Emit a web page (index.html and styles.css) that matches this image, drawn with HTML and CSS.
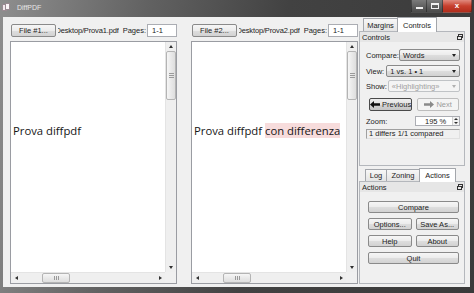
FILE: index.html
```html
<!DOCTYPE html>
<html>
<head>
<meta charset="utf-8">
<title>DiffPDF</title>
<link rel="stylesheet" href="styles.css">
</head>
<body>
<div class="win">
  <div class="titlebar">
    <svg class="appicon" width="8" height="8" viewBox="0 0 8 8"><rect x="0.5" y="1.5" width="4" height="6" fill="#f3e9ee" stroke="#9a8a92"/><rect x="3.5" y="0.5" width="4" height="6" fill="#fbf5f8" stroke="#9a8a92"/></svg>
    <span class="title">DiffPDF</span>
    <div class="wbtns">
      <div class="wbtn"><span class="g-min"></span></div>
      <div class="wbtn"><span class="g-max"></span></div>
      <div class="wbtn close">x</div>
    </div>
  </div>
  <div class="client">
    <div class="views">
      <div class="pane">
        <div class="toolbar">
          <div class="btn filebtn">File #1...</div>
          <div class="path"><span>Desktop/Prova1.pdf</span></div>
          <span class="plabel">Pages:</span>
          <div class="pinput">1-1</div>
        </div>
        <div class="view">
          <div class="page"><p class="doc">Prova diffpdf</p></div>
          <div class="vscroll">
            <div class="varr"><span class="tri-up"></span></div>
            <div class="vtrack"><div class="vthumb"><span class="grip-h"></span></div></div>
            <div class="varr"><span class="tri-down"></span></div>
          </div>
          <div class="hscroll">
            <div class="harr"><span class="tri-left"></span></div>
            <div class="htrack"><div class="hthumb"><span class="grip-v"></span></div></div>
            <div class="harr"><span class="tri-right"></span></div>
          </div>
          <div class="corner"></div>
        </div>
      </div>
      <div class="pane">
        <div class="toolbar">
          <div class="btn filebtn">File #2...</div>
          <div class="path"><span>Desktop/Prova2.pdf</span></div>
          <span class="plabel">Pages:</span>
          <div class="pinput">1-1</div>
        </div>
        <div class="view">
          <div class="page"><p class="doc">Prova diffpdf <span class="diff">con differenza</span></p></div>
          <div class="vscroll">
            <div class="varr"><span class="tri-up"></span></div>
            <div class="vtrack"><div class="vthumb"><span class="grip-h"></span></div></div>
            <div class="varr"><span class="tri-down"></span></div>
          </div>
          <div class="hscroll">
            <div class="harr"><span class="tri-left"></span></div>
            <div class="htrack"><div class="hthumb"><span class="grip-v"></span></div></div>
            <div class="harr"><span class="tri-right"></span></div>
          </div>
          <div class="corner"></div>
        </div>
      </div>
    </div>
    <div class="dock">
      <div class="group group1">
        <div class="tabs tabs1">
          <div class="tab w-margins">Margins</div>
          <div class="tab sel w-controls">Controls</div>
        </div>
        <div class="panel">
          <div class="dtitle"><span>Controls</span>
            <svg width="6" height="6" viewBox="0 0 6 6"><rect x="1.5" y="0.5" width="4" height="3" fill="none" stroke="#333"/><rect x="0.5" y="2.5" width="4" height="3" fill="#e9e9e9" stroke="#333"/></svg>
          </div>
          <div class="ccontent">
            <div class="crow r-compare"><span class="lbl">Compare:</span><div class="combo">Words<span class="carr"></span></div></div>
            <div class="crow r-view"><span class="lbl">View:</span><div class="combo">1 vs. 1 • 1<span class="carr"></span></div></div>
            <div class="crow r-show"><span class="lbl">Show:</span><div class="combo disabled">«Highlighting»<span class="carr"></span></div></div>
            <div class="crow r-nav">
              <div class="btn navbtn focus">
                <svg width="10" height="7" viewBox="0 0 10 7"><path d="M0 3.5 L4 0 L4 2.3 L10 2.3 L10 4.7 L4 4.7 L4 7 Z" fill="#111"/></svg>
                <span>Previous</span>
              </div>
              <div class="btn navbtn disabledbtn">
                <svg width="10" height="7" viewBox="0 0 10 7"><path d="M10 3.5 L6 0 L6 2.3 L0 2.3 L0 4.7 L6 4.7 L6 7 Z" fill="#333"/></svg>
                <span>Next</span>
              </div>
            </div>
            <div class="crow r-zoom"><span class="lbl">Zoom:</span>
              <div class="spin"><span class="spinval">195 %</span><div class="spinbtns"><span class="tri-up small"></span><span class="tri-down small"></span></div></div>
            </div>
            <div class="status">1 differs 1/1 compared</div>
          </div>
        </div>
      </div>
      <div class="group group2">
        <div class="tabs tabs2">
          <div class="tab w-log">Log</div>
          <div class="tab w-zoning">Zoning</div>
          <div class="tab sel w-actions">Actions</div>
        </div>
        <div class="panel">
          <div class="dtitle"><span>Actions</span>
            <svg width="6" height="6" viewBox="0 0 6 6"><rect x="1.5" y="0.5" width="4" height="3" fill="none" stroke="#333"/><rect x="0.5" y="2.5" width="4" height="3" fill="#e9e9e9" stroke="#333"/></svg>
          </div>
          <div class="acontent">
            <div class="btn abtn first">Compare</div>
            <div class="arow"><div class="btn abtn">Options...</div><div class="btn abtn">Save As...</div></div>
            <div class="arow"><div class="btn abtn">Help</div><div class="btn abtn">About</div></div>
            <div class="btn abtn">Quit</div>
          </div>
        </div>
      </div>
    </div>
  </div>
</div>
</body>
</html>
```

FILE: styles.css
```css
* { box-sizing: border-box; }
html, body { margin: 0; padding: 0; }
body {
  width: 474px;
  height: 293px;
  overflow: hidden;
  font-family: "Liberation Sans", Arial, sans-serif;
  font-size: 7.5px;
  color: #1c1c1c;
  background: #3a3a3a;
}
.win {
  width: 474px;
  height: 293px;
  display: flex;
  flex-direction: column;
  background: linear-gradient(100deg, #8e8e8e 0%, #626262 28%, #424242 55%, #3a3a3a 100%);
}
.titlebar {
  height: 17px;
  flex: none;
  display: flex;
  align-items: flex-start;
}
.appicon { margin: 3px 0 0 2px; }
.title {
  margin: 4px 0 0 7px;
  font-size: 7px;
  line-height: 8px;
  color: #e6e6e6;
}
.wbtns {
  margin-left: auto;
  margin-right: 2px;
  display: flex;
  height: 13px;
}
.wbtn {
  width: 16px;
  height: 13px;
  display: flex;
  align-items: center;
  justify-content: center;
  border: 1px solid rgba(0,0,0,0.35);
  border-top: none;
  background: linear-gradient(#7a7a7a, #4a4a4a);
}
.wbtn + .wbtn { border-left: none; }
.g-min { width: 7px; height: 2px; background: #f0f0f0; margin-top: 4px; }
.g-max { width: 8px; height: 6px; border: 1px solid #f0f0f0; border-top-width: 2px; }
.wbtn.close {
  width: 29px;
  border-radius: 0 0 3px 0;
  background: linear-gradient(#e08a7e, #c7402e 50%, #b12d1c);
  color: #fff;
  font-weight: bold;
  font-size: 8px;
  line-height: 8px;
}

.client {
  flex: 1;
  margin: 0 4px 6px 3px;
  background: #f0f0f0;
  display: flex;
  min-height: 0;
}
.views {
  display: flex;
  gap: 14px;
  padding: 6px 0 3px 7px;
}
.pane {
  width: 167px;
  display: flex;
  flex-direction: column;
  gap: 3px;
}
.toolbar {
  height: 15px;
  display: flex;
  align-items: center;
}
.btn {
  display: flex;
  align-items: center;
  justify-content: center;
  border: 1px solid #8a8a8a;
  border-radius: 2px;
  background: linear-gradient(#f6f6f6 0%, #ececec 50%, #dedede 51%, #d2d2d2 100%);
  color: #1c1c1c;
  white-space: nowrap;
}
.filebtn {
  width: 45px;
  height: 13px;
  margin-left: 1px;
}
.path {
  flex: 1;
  overflow: hidden;
  display: flex;
  justify-content: flex-end;
  margin: 0 4px 0 2px;
}
.path span { flex: none; white-space: nowrap; letter-spacing: -0.15px; }
.plabel { margin-right: 1px; }
.pinput {
  width: 30px;
  height: 13px;
  border: 1px solid #abadb3;
  background: #fff;
  padding-left: 4px;
  line-height: 11px;
}
.view {
  flex: 1;
  border: 1px solid #9a9ca2;
  background: #fff;
  display: grid;
  grid-template-columns: 1fr 11px;
  grid-template-rows: 1fr 11px;
  min-height: 0;
}
.page { overflow: hidden; }
.doc {
  margin: 82px 0 0 2px;
  font-family: "Open Sans", "Noto Sans", sans-serif;
  font-size: 11.3px;
  line-height: 14px;
  color: #161616;
  white-space: nowrap;
}
.diff { background: #f7dcdc; }

.vscroll {
  display: flex;
  flex-direction: column;
  background: #efefef;
  border-left: 1px solid #e4e4e4;
}
.varr { height: 9px; display: flex; align-items: center; justify-content: center; flex: none; }
.vtrack { flex: 1; }
.vthumb {
  height: 49px;
  border: 1px solid #b4b4b4;
  border-radius: 2px;
  background: linear-gradient(90deg, #f6f6f6, #e9e9e9 50%, #dedede);
  display: flex;
  align-items: center;
  justify-content: center;
}
.grip-h { width: 5px; height: 5px; border-top: 1px solid #9a9a9a; border-bottom: 1px solid #9a9a9a; background: linear-gradient(transparent 1px, #9a9a9a 1px, #9a9a9a 2px, transparent 2px); }
.hscroll {
  display: flex;
  background: #efefef;
  border-top: 1px solid #e4e4e4;
}
.harr { width: 10px; display: flex; align-items: center; justify-content: center; flex: none; }
.htrack { flex: 1; }
.hthumb {
  width: 28px;
  height: 100%;
  margin-left: 21px;
  border: 1px solid #b4b4b4;
  border-radius: 2px;
  background: linear-gradient(#f6f6f6, #e9e9e9 50%, #dedede);
  display: flex;
  align-items: center;
  justify-content: center;
}
.grip-v { width: 5px; height: 4px; border-left: 1px solid #9a9a9a; border-right: 1px solid #9a9a9a; background: linear-gradient(90deg, transparent 1px, #9a9a9a 1px, #9a9a9a 2px, transparent 2px); }
.corner { background: #f0f0f0; }

.tri-up { width: 0; height: 0; border-left: 2.5px solid transparent; border-right: 2.5px solid transparent; border-bottom: 3px solid #303030; }
.tri-down { width: 0; height: 0; border-left: 2.5px solid transparent; border-right: 2.5px solid transparent; border-top: 3px solid #303030; }
.tri-left { width: 0; height: 0; border-top: 2.5px solid transparent; border-bottom: 2.5px solid transparent; border-right: 3px solid #303030; }
.tri-right { width: 0; height: 0; border-top: 2.5px solid transparent; border-bottom: 2.5px solid transparent; border-left: 3px solid #303030; }
.tri-up.small, .tri-down.small { border-left-width: 2px; border-right-width: 2px; border-bottom-width: 2px; border-top-width: 2px; }
.tri-up.small { border-top: none; }
.tri-down.small { border-bottom: none; }

.dock {
  width: 109px;
  display: flex;
  flex-direction: column;
  padding: 0 2px 3px 1px;
}
.group1 { height: 151px; display: flex; flex-direction: column; }
.group2 { flex: 1; display: flex; flex-direction: column; }
.tabs {
  height: 14px;
  display: flex;
  align-items: flex-end;
  flex: none;
}
.tabs1 { padding-left: 4px; }
.tabs2 { padding-left: 6px; height: 13px; }
.tab {
  height: 13px;
  border: 1px solid #a3a6ab;
  border-bottom: none;
  margin-right: -1px;
  background: linear-gradient(#f7f7f7, #e4e4e4);
  display: flex;
  align-items: center;
  justify-content: center;
  border-radius: 1px 1px 0 0;
}
.tabs2 .tab { height: 12px; }
.tab.sel {
  height: 15px;
  margin-bottom: -1px;
  background: #fff;
  position: relative;
  z-index: 1;
}
.tabs2 .tab.sel { height: 14px; }
.w-margins { width: 35px; }
.w-controls { width: 40px; }
.w-log { width: 22px; }
.w-zoning { width: 34px; }
.w-actions { width: 37px; }
.panel {
  flex: 1;
  border: 1px solid #b4b7bc;
  background: #f0f0f0;
  display: flex;
  flex-direction: column;
  min-height: 0;
}
.group1 .panel { margin-bottom: 2px; }
.dtitle {
  height: 10px;
  flex: none;
  display: flex;
  align-items: center;
  justify-content: space-between;
  padding: 0 1px 0 2px;
  background: #e6e6e6;
}
.ccontent {
  display: flex;
  flex-direction: column;
  padding: 0 4px 0 6px;
}
.crow { display: flex; align-items: center; }
.lbl { flex: none; }
.r-compare { margin-top: 7px; height: 12px; gap: 0; }
.r-view { margin-top: 4px; height: 12px; gap: 2px; }
.r-show { margin-top: 3px; height: 12px; gap: 1px; }
.r-nav { margin-top: 6px; height: 13px; gap: 5px; padding: 0 1px 0 3px; }
.r-zoom { margin-top: 5px; height: 10px; justify-content: space-between; }
.combo {
  flex: 1;
  height: 12px;
  border: 1px solid #8a8a8a;
  border-radius: 2px;
  background: linear-gradient(#f6f6f6 0%, #ececec 50%, #dedede 51%, #d2d2d2 100%);
  display: flex;
  align-items: center;
  padding-left: 3px;
  white-space: nowrap;
}
.carr {
  margin-left: auto;
  margin-right: 3px;
  width: 0; height: 0;
  border-left: 2.5px solid transparent;
  border-right: 2.5px solid transparent;
  border-top: 3px solid #222;
}
.combo.disabled {
  background: #f4f4f4;
  border-color: #c0c3c6;
  color: #a0a0a0;
}
.combo.disabled .carr { border-top-color: #b0b0b0; }
.navbtn { flex: 1; height: 13px; gap: 2px; }
.navbtn.focus { border-color: #4a4a4a; background: linear-gradient(#eeeeee 0%, #e2e2e2 50%, #d2d2d2 51%, #c6c6c6 100%); }
.disabledbtn { color: #9c9c9c; border-color: #bdbdbd; background: #f4f4f4; }
.disabledbtn svg path { fill: #8a8a8a; }
.spin {
  width: 45px;
  height: 10px;
  border: 1px solid #abadb3;
  background: #fff;
  display: flex;
  align-items: center;
}
.spinval { margin-left: 9px; }
.spinbtns {
  margin-left: auto;
  width: 7px;
  height: 100%;
  border-left: 1px solid #d0d0d0;
  display: flex;
  flex-direction: column;
  align-items: center;
  justify-content: space-around;
  background: #f2f2f2;
}
.status {
  margin-top: 3px;
  height: 10px;
  border: 1px solid #a0a0a0;
  border-right-color: #e0e0e0;
  border-bottom-color: #e0e0e0;
  padding-left: 2px;
  line-height: 8px;
  white-space: nowrap;
}
.acontent {
  display: flex;
  flex-direction: column;
  gap: 5px;
  padding: 9px 5px 0 8px;
}
.abtn { height: 12px; }
.arow { display: flex; gap: 4px; }
.arow .abtn { flex: 1; }
```
